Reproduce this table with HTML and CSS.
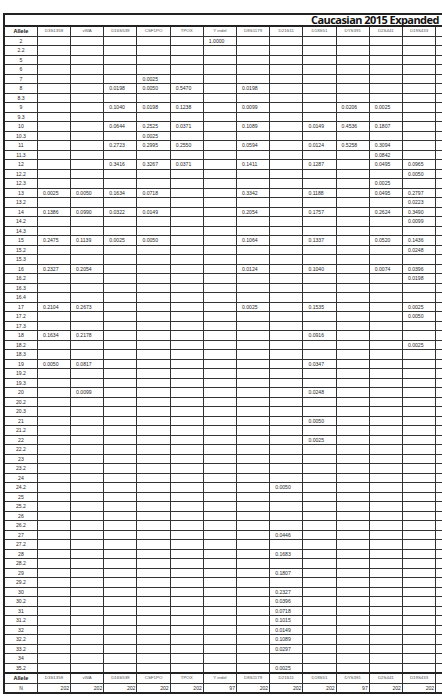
FILE: index.html
```html
<!DOCTYPE html>
<html>
<head>
<meta charset="utf-8">
<link rel="stylesheet" href="styles.css">
</head>
<body>
<div class="frame">
<table class="sheet">
<colgroup><col class="c-allele"><col><col><col><col><col><col><col><col><col><col><col><col><col></colgroup>
<thead>
<tr class="title-row"><th colspan="14" class="title">Caucasian 2015 Expanded</th></tr>
<tr class="head"><th class="lbl">Allele</th><th>D3S1358</th><th>vWA</th><th>D16S539</th><th>CSF1PO</th><th>TPOX</th><th>Y indel</th><th>D8S1179</th><th>D21S11</th><th>D18S51</th><th>DYS391</th><th>D2S441</th><th>D19S433</th><th></th></tr>
</thead>
<tbody>
<tr><th>2</th><td></td><td></td><td></td><td></td><td></td><td>1.0000</td><td></td><td></td><td></td><td></td><td></td><td></td><td></td></tr>
<tr><th>2.2</th><td></td><td></td><td></td><td></td><td></td><td></td><td></td><td></td><td></td><td></td><td></td><td></td><td></td></tr>
<tr><th>5</th><td></td><td></td><td></td><td></td><td></td><td></td><td></td><td></td><td></td><td></td><td></td><td></td><td></td></tr>
<tr><th>6</th><td></td><td></td><td></td><td></td><td></td><td></td><td></td><td></td><td></td><td></td><td></td><td></td><td></td></tr>
<tr><th>7</th><td></td><td></td><td></td><td>0.0025</td><td></td><td></td><td></td><td></td><td></td><td></td><td></td><td></td><td></td></tr>
<tr><th>8</th><td></td><td></td><td>0.0198</td><td>0.0050</td><td>0.5470</td><td></td><td>0.0198</td><td></td><td></td><td></td><td></td><td></td><td></td></tr>
<tr><th>8.3</th><td></td><td></td><td></td><td></td><td></td><td></td><td></td><td></td><td></td><td></td><td></td><td></td><td></td></tr>
<tr><th>9</th><td></td><td></td><td>0.1040</td><td>0.0198</td><td>0.1238</td><td></td><td>0.0099</td><td></td><td></td><td>0.0206</td><td>0.0025</td><td></td><td></td></tr>
<tr><th>9.3</th><td></td><td></td><td></td><td></td><td></td><td></td><td></td><td></td><td></td><td></td><td></td><td></td><td></td></tr>
<tr><th>10</th><td></td><td></td><td>0.0644</td><td>0.2525</td><td>0.0371</td><td></td><td>0.1089</td><td></td><td>0.0149</td><td>0.4536</td><td>0.1807</td><td></td><td></td></tr>
<tr><th>10.3</th><td></td><td></td><td></td><td>0.0025</td><td></td><td></td><td></td><td></td><td></td><td></td><td></td><td></td><td></td></tr>
<tr><th>11</th><td></td><td></td><td>0.2723</td><td>0.2995</td><td>0.2550</td><td></td><td>0.0594</td><td></td><td>0.0124</td><td>0.5258</td><td>0.3094</td><td></td><td></td></tr>
<tr><th>11.3</th><td></td><td></td><td></td><td></td><td></td><td></td><td></td><td></td><td></td><td></td><td>0.0842</td><td></td><td></td></tr>
<tr><th>12</th><td></td><td></td><td>0.3416</td><td>0.3267</td><td>0.0371</td><td></td><td>0.1411</td><td></td><td>0.1287</td><td></td><td>0.0495</td><td>0.0965</td><td></td></tr>
<tr><th>12.2</th><td></td><td></td><td></td><td></td><td></td><td></td><td></td><td></td><td></td><td></td><td></td><td>0.0050</td><td></td></tr>
<tr><th>12.3</th><td></td><td></td><td></td><td></td><td></td><td></td><td></td><td></td><td></td><td></td><td>0.0025</td><td></td><td></td></tr>
<tr><th>13</th><td>0.0025</td><td>0.0050</td><td>0.1634</td><td>0.0718</td><td></td><td></td><td>0.3342</td><td></td><td>0.1188</td><td></td><td>0.0495</td><td>0.2797</td><td></td></tr>
<tr><th>13.2</th><td></td><td></td><td></td><td></td><td></td><td></td><td></td><td></td><td></td><td></td><td></td><td>0.0223</td><td></td></tr>
<tr><th>14</th><td>0.1386</td><td>0.0990</td><td>0.0322</td><td>0.0149</td><td></td><td></td><td>0.2054</td><td></td><td>0.1757</td><td></td><td>0.2624</td><td>0.3490</td><td></td></tr>
<tr><th>14.2</th><td></td><td></td><td></td><td></td><td></td><td></td><td></td><td></td><td></td><td></td><td></td><td>0.0099</td><td></td></tr>
<tr><th>14.3</th><td></td><td></td><td></td><td></td><td></td><td></td><td></td><td></td><td></td><td></td><td></td><td></td><td></td></tr>
<tr><th>15</th><td>0.2475</td><td>0.1139</td><td>0.0025</td><td>0.0050</td><td></td><td></td><td>0.1064</td><td></td><td>0.1337</td><td></td><td>0.0520</td><td>0.1436</td><td></td></tr>
<tr><th>15.2</th><td></td><td></td><td></td><td></td><td></td><td></td><td></td><td></td><td></td><td></td><td></td><td>0.0248</td><td></td></tr>
<tr><th>15.3</th><td></td><td></td><td></td><td></td><td></td><td></td><td></td><td></td><td></td><td></td><td></td><td></td><td></td></tr>
<tr><th>16</th><td>0.2327</td><td>0.2054</td><td></td><td></td><td></td><td></td><td>0.0124</td><td></td><td>0.1040</td><td></td><td>0.0074</td><td>0.0396</td><td></td></tr>
<tr><th>16.2</th><td></td><td></td><td></td><td></td><td></td><td></td><td></td><td></td><td></td><td></td><td></td><td>0.0198</td><td></td></tr>
<tr><th>16.3</th><td></td><td></td><td></td><td></td><td></td><td></td><td></td><td></td><td></td><td></td><td></td><td></td><td></td></tr>
<tr><th>16.4</th><td></td><td></td><td></td><td></td><td></td><td></td><td></td><td></td><td></td><td></td><td></td><td></td><td></td></tr>
<tr><th>17</th><td>0.2104</td><td>0.2673</td><td></td><td></td><td></td><td></td><td>0.0025</td><td></td><td>0.1535</td><td></td><td></td><td>0.0025</td><td></td></tr>
<tr><th>17.2</th><td></td><td></td><td></td><td></td><td></td><td></td><td></td><td></td><td></td><td></td><td></td><td>0.0050</td><td></td></tr>
<tr><th>17.3</th><td></td><td></td><td></td><td></td><td></td><td></td><td></td><td></td><td></td><td></td><td></td><td></td><td></td></tr>
<tr><th>18</th><td>0.1634</td><td>0.2178</td><td></td><td></td><td></td><td></td><td></td><td></td><td>0.0916</td><td></td><td></td><td></td><td></td></tr>
<tr><th>18.2</th><td></td><td></td><td></td><td></td><td></td><td></td><td></td><td></td><td></td><td></td><td></td><td>0.0025</td><td></td></tr>
<tr><th>18.3</th><td></td><td></td><td></td><td></td><td></td><td></td><td></td><td></td><td></td><td></td><td></td><td></td><td></td></tr>
<tr><th>19</th><td>0.0050</td><td>0.0817</td><td></td><td></td><td></td><td></td><td></td><td></td><td>0.0347</td><td></td><td></td><td></td><td></td></tr>
<tr><th>19.2</th><td></td><td></td><td></td><td></td><td></td><td></td><td></td><td></td><td></td><td></td><td></td><td></td><td></td></tr>
<tr><th>19.3</th><td></td><td></td><td></td><td></td><td></td><td></td><td></td><td></td><td></td><td></td><td></td><td></td><td></td></tr>
<tr><th>20</th><td></td><td>0.0099</td><td></td><td></td><td></td><td></td><td></td><td></td><td>0.0248</td><td></td><td></td><td></td><td></td></tr>
<tr><th>20.2</th><td></td><td></td><td></td><td></td><td></td><td></td><td></td><td></td><td></td><td></td><td></td><td></td><td></td></tr>
<tr><th>20.3</th><td></td><td></td><td></td><td></td><td></td><td></td><td></td><td></td><td></td><td></td><td></td><td></td><td></td></tr>
<tr><th>21</th><td></td><td></td><td></td><td></td><td></td><td></td><td></td><td></td><td>0.0050</td><td></td><td></td><td></td><td></td></tr>
<tr><th>21.2</th><td></td><td></td><td></td><td></td><td></td><td></td><td></td><td></td><td></td><td></td><td></td><td></td><td></td></tr>
<tr><th>22</th><td></td><td></td><td></td><td></td><td></td><td></td><td></td><td></td><td>0.0025</td><td></td><td></td><td></td><td></td></tr>
<tr><th>22.2</th><td></td><td></td><td></td><td></td><td></td><td></td><td></td><td></td><td></td><td></td><td></td><td></td><td></td></tr>
<tr><th>23</th><td></td><td></td><td></td><td></td><td></td><td></td><td></td><td></td><td></td><td></td><td></td><td></td><td></td></tr>
<tr><th>23.2</th><td></td><td></td><td></td><td></td><td></td><td></td><td></td><td></td><td></td><td></td><td></td><td></td><td></td></tr>
<tr><th>24</th><td></td><td></td><td></td><td></td><td></td><td></td><td></td><td></td><td></td><td></td><td></td><td></td><td></td></tr>
<tr><th>24.2</th><td></td><td></td><td></td><td></td><td></td><td></td><td></td><td>0.0050</td><td></td><td></td><td></td><td></td><td></td></tr>
<tr><th>25</th><td></td><td></td><td></td><td></td><td></td><td></td><td></td><td></td><td></td><td></td><td></td><td></td><td></td></tr>
<tr><th>25.2</th><td></td><td></td><td></td><td></td><td></td><td></td><td></td><td></td><td></td><td></td><td></td><td></td><td></td></tr>
<tr><th>26</th><td></td><td></td><td></td><td></td><td></td><td></td><td></td><td></td><td></td><td></td><td></td><td></td><td></td></tr>
<tr><th>26.2</th><td></td><td></td><td></td><td></td><td></td><td></td><td></td><td></td><td></td><td></td><td></td><td></td><td></td></tr>
<tr><th>27</th><td></td><td></td><td></td><td></td><td></td><td></td><td></td><td>0.0446</td><td></td><td></td><td></td><td></td><td></td></tr>
<tr><th>27.2</th><td></td><td></td><td></td><td></td><td></td><td></td><td></td><td></td><td></td><td></td><td></td><td></td><td></td></tr>
<tr><th>28</th><td></td><td></td><td></td><td></td><td></td><td></td><td></td><td>0.1683</td><td></td><td></td><td></td><td></td><td></td></tr>
<tr><th>28.2</th><td></td><td></td><td></td><td></td><td></td><td></td><td></td><td></td><td></td><td></td><td></td><td></td><td></td></tr>
<tr><th>29</th><td></td><td></td><td></td><td></td><td></td><td></td><td></td><td>0.1807</td><td></td><td></td><td></td><td></td><td></td></tr>
<tr><th>29.2</th><td></td><td></td><td></td><td></td><td></td><td></td><td></td><td></td><td></td><td></td><td></td><td></td><td></td></tr>
<tr><th>30</th><td></td><td></td><td></td><td></td><td></td><td></td><td></td><td>0.2327</td><td></td><td></td><td></td><td></td><td></td></tr>
<tr><th>30.2</th><td></td><td></td><td></td><td></td><td></td><td></td><td></td><td>0.0396</td><td></td><td></td><td></td><td></td><td></td></tr>
<tr><th>31</th><td></td><td></td><td></td><td></td><td></td><td></td><td></td><td>0.0718</td><td></td><td></td><td></td><td></td><td></td></tr>
<tr><th>31.2</th><td></td><td></td><td></td><td></td><td></td><td></td><td></td><td>0.1015</td><td></td><td></td><td></td><td></td><td></td></tr>
<tr><th>32</th><td></td><td></td><td></td><td></td><td></td><td></td><td></td><td>0.0149</td><td></td><td></td><td></td><td></td><td></td></tr>
<tr><th>32.2</th><td></td><td></td><td></td><td></td><td></td><td></td><td></td><td>0.1089</td><td></td><td></td><td></td><td></td><td></td></tr>
<tr><th>33.2</th><td></td><td></td><td></td><td></td><td></td><td></td><td></td><td>0.0297</td><td></td><td></td><td></td><td></td><td></td></tr>
<tr><th>34</th><td></td><td></td><td></td><td></td><td></td><td></td><td></td><td></td><td></td><td></td><td></td><td></td><td></td></tr>
<tr><th>35.2</th><td></td><td></td><td></td><td></td><td></td><td></td><td></td><td>0.0025</td><td></td><td></td><td></td><td></td><td></td></tr>
</tbody>
<tfoot>
<tr class="head foot-head"><th class="lbl">Allele</th><th>D3S1358</th><th>vWA</th><th>D16S539</th><th>CSF1PO</th><th>TPOX</th><th>Y indel</th><th>D8S1179</th><th>D21S11</th><th>D18S51</th><th>DYS391</th><th>D2S441</th><th>D19S433</th><th></th></tr>
<tr class="count"><th>N</th><td>202</td><td>202</td><td>202</td><td>202</td><td>202</td><td>97</td><td>202</td><td>202</td><td>202</td><td>97</td><td>202</td><td>202</td><td></td></tr>
</tfoot>
</table>
</div>
</body>
</html>
```
FILE: styles.css
```css
html, body {
  margin: 0;
  padding: 0;
  background: #ffffff;
  overflow: hidden;
}

.frame {
  width: 442px;
  height: 700px;
  overflow: hidden;
  padding: 13px 0 0 3px;
  box-sizing: border-box;
}

.sheet {
  border-collapse: collapse;
  table-layout: fixed;
  width: 465px;
  border: 2px solid #222;
  font-family: "Liberation Sans", Arial, sans-serif;
  color: #2a2a2a;
}

.sheet col {
  width: 33.2px;
}

.sheet col.c-allele {
  width: 33.4px;
}

.sheet th,
.sheet td {
  border: 1px solid #333;
  padding: 0;
  height: 8.5px;
  line-height: 6px;
  font-size: 5.1px;
  font-weight: normal;
  white-space: nowrap;
  overflow: hidden;
  vertical-align: middle;
}

.sheet td {
  padding-left: 5px;
  text-align: left;
}

.sheet tbody th {
  text-align: center;
  color: #2a2a2a;
}

.title-row th.title {
  height: 10px;
  overflow: visible;
  border-bottom: 2px solid #222;
  font-family: "Open Sans", "Liberation Sans", sans-serif;
  font-size: 11px;
  font-weight: 700;
  line-height: 10px;
  letter-spacing: -0.55px;
  color: #111;
  text-align: right;
  padding-right: 29px;
}

.head th {
  text-align: center;
  font-size: 4.4px;
  color: #555;
}

.head th.lbl {
  font-size: 5.5px;
  font-weight: 700;
  color: #111;
}

.foot-head th {
  border-top: 2px solid #222;
}

.count th {
  text-align: center;
  font-size: 5px;
  color: #2a2a2a;
}

.count td {
  text-align: right;
  padding-left: 0;
  padding-right: 1px;
  color: #2a2a2a;
}
```
